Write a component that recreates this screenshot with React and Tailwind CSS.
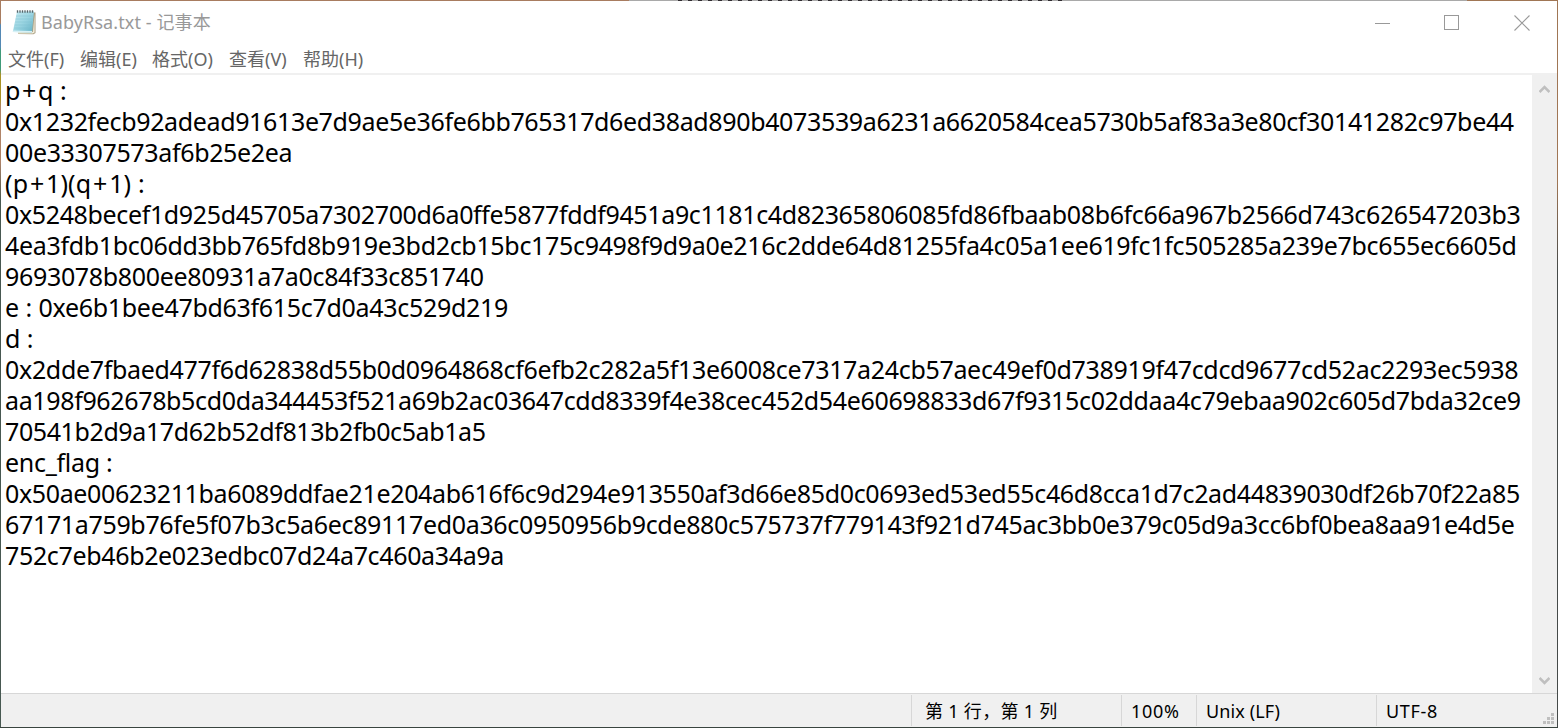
import React from 'react'

const MENUS = [
  { label: '文件(F)', cls: 'w-[72px]' },
  { label: '编辑(E)', cls: 'w-[72px]' },
  { label: '格式(O)', cls: 'w-[77px]' },
  { label: '查看(V)', cls: 'w-[74px]' },
  { label: '帮助(H)', cls: 'w-[72px]' },
]

const LINES = [
  { text: 'p+q :', cls: 'tracking-[0px]' },
  { text: '0x1232fecb92adead91613e7d9ae5e36fe6bb765317d6ed38ad890b4073539a6231a6620584cea5730b5af83a3e80cf30141282c97be44', cls: 'tracking-[-0.36px]' },
  { text: '00e33307573af6b25e2ea', cls: 'tracking-[-0.35px]' },
  { text: '(p+1)(q+1) :', cls: 'tracking-[0.15px]' },
  { text: '0x5248becef1d925d45705a7302700d6a0ffe5877fddf9451a9c1181c4d82365806085fd86fbaab08b6fc66a967b2566d743c626547203b3', cls: 'tracking-[-0.365px]' },
  { text: '4ea3fdb1bc06dd3bb765fd8b919e3bd2cb15bc175c9498f9d9a0e216c2dde64d81255fa4c05a1ee619fc1fc505285a239e7bc655ec6605d', cls: 'tracking-[-0.325px]' },
  { text: '9693078b800ee80931a7a0c84f33c851740', cls: 'tracking-[-0.33px]' },
  { text: 'e : 0xe6b1bee47bd63f615c7d0a43c529d219', cls: 'tracking-[-0.31px] [word-spacing:0.5px]' },
  { text: 'd :', cls: 'tracking-[-0.1px]' },
  { text: '0x2dde7fbaed477f6d62838d55b0d0964868cf6efb2c282a5f13e6008ce7317a24cb57aec49ef0d738919f47cdcd9677cd52ac2293ec5938', cls: 'tracking-[-0.325px]' },
  { text: 'aa198f962678b5cd0da344453f521a69b2ac03647cdd8339f4e38cec452d54e60698833d67f9315c02ddaa4c79ebaa902c605d7bda32ce9', cls: 'tracking-[-0.355px]' },
  { text: '70541b2d9a17d62b52df813b2fb0c5ab1a5', cls: 'tracking-[-0.4px]' },
  { text: 'enc_flag :', cls: 'tracking-[-0.3px]' },
  { text: '0x50ae00623211ba6089ddfae21e204ab616f6c9d294e913550af3d66e85d0c0693ed53ed55c46d8cca1d7c2ad44839030df26b70f22a85', cls: 'tracking-[-0.365px]' },
  { text: '67171a759b76fe5f07b3c5a6ec89117ed0a36c0950956b9cde880c575737f779143f921d745ac3bb0e379c05d9a3cc6bf0bea8aa91e4d5e', cls: 'tracking-[-0.34px]' },
  { text: '752c7eb46b2e023edbc07d24a7c460a34a9a', cls: 'tracking-[-0.35px]' },
]

function NotepadIcon() {
  return (
    <svg width="24" height="26" viewBox="0 0 24 26">
      <defs>
        <linearGradient id="page" x1="0" y1="0" x2="1" y2="1">
          <stop offset="0" stopColor="#c6eaf1" />
          <stop offset="0.5" stopColor="#9bd5e2" />
          <stop offset="1" stopColor="#62b0c4" />
        </linearGradient>
      </defs>
      <path d="M6 3L23.5 3.5L23.5 24L21.5 25.3L6 25Z" fill="#a59c82" />
      <path d="M6 23L21 23L22.6 4L22.6 23.4L21 24.6L6 24.4Z" fill="#f3edd8" />
      <path d="M5 2.5L22 2.5L20 23.5L0.8 23Z" fill="url(#page)" />
      <path d="M1.2 21.4L20.2 22L20 23.5L0.8 23Z" fill="#d7f1f6" />
      <path d="M4 7H20.5M3.6 10H20.3M3.2 13H20M2.7 16H19.7M2.2 19H19.4" stroke="#7dbfd0" strokeWidth="0.6" opacity="0.7" />
      <path d="M5.5 1.2V3.8M8 1.2V3.8M10.5 1.2V3.8M13 1.2V3.8M15.5 1.2V3.8M18 1.2V3.8M20.5 1.2V3.8" stroke="#58656a" strokeWidth="1.3" />
    </svg>
  )
}

function TitleBar() {
  return (
    <div className="flex h-11 shrink-0 items-center pl-[11px]">
      <div className="mb-[2px]"><NotepadIcon /></div>
      <span className="mb-[2px] ml-[5px] flex-1 whitespace-pre text-[18px] tracking-[0.1px] text-[#999999]">BabyRsa.txt - 记事本</span>
      <div className="flex items-center text-[#999999]">
        <svg width="16" height="16" className="mr-[53px]" shapeRendering="crispEdges"><path d="M0 8.5H15" stroke="currentColor" /></svg>
        <svg width="16" height="16" className="mr-[54px]" shapeRendering="crispEdges"><rect x="0.5" y="0.5" width="14" height="14" fill="none" stroke="currentColor" /></svg>
        <svg width="16" height="16" className="mr-[27px]"><path d="M0.5 0.5L15.5 15.5M15.5 0.5L0.5 15.5" stroke="currentColor" strokeWidth="1.1" /></svg>
      </div>
    </div>
  )
}

function MenuBar() {
  return (
    <div className="flex h-7 shrink-0 items-center pl-[7px] text-[18px] text-[#666666]">
      {MENUS.map((m) => (
        <span key={m.label} className={`${m.cls} whitespace-nowrap`}>{m.label}</span>
      ))}
    </div>
  )
}

function ScrollBar() {
  return (
    <div className="flex w-[25px] shrink-0 flex-col items-center justify-between bg-[#f0f0f0] pt-[9px] pb-[7px]">
      <svg width="11" height="10"><path d="M0.5 8L5.5 3L10.5 8" fill="none" stroke="#bfbfbf" strokeWidth="2.6" /></svg>
      <svg width="11" height="10"><path d="M0.5 2L5.5 7L10.5 2" fill="none" stroke="#bfbfbf" strokeWidth="2.6" /></svg>
    </div>
  )
}

function StatusBar() {
  return (
    <div className="flex h-[34px] shrink-0 border-t border-[#d7d7d7] bg-[#f0f0f0] pt-px text-[18px] text-black">
      <div className="flex-1" />
      <div className="mb-px flex w-[210px] items-center border-l border-[#d7d7d7] pt-[2px] pl-[13px] whitespace-pre tracking-[0.3px]">第 1 行，第 1 列</div>
      <div className="mb-px flex w-[75px] items-center border-l border-[#d7d7d7] pt-[2px] pl-[9px] tracking-[0.7px]">100%</div>
      <div className="mb-px flex w-[180px] items-center border-l border-[#d7d7d7] pt-[2px] pl-[9px] tracking-[0.1px]">Unix (LF)</div>
      <div className="mb-px flex w-[181px] items-center justify-between border-l border-[#d7d7d7] pt-[2px] pl-[9px] tracking-[0.7px]">
        UTF-8
        <svg width="12" height="12" className="mr-[2px] mb-px self-end" fill="#bfbfbf">
          <path d="M8 0h3v3h-3zM4 4h3v3h-3zM8 4h3v3h-3zM0 8h3v3h-3zM4 8h3v3h-3zM8 8h3v3h-3z" />
        </svg>
      </div>
    </div>
  )
}

// plus signs get a little extra room on both sides
function Line({ text, cls }) {
  return (
    <div className="h-[31px] whitespace-pre">
      <span className={cls}>
        {text.split(/(\+)/).map((part, i) => (
          part === '+' ? <span key={i} className="px-[1.7px]">+</span> : part
        ))}
      </span>
    </div>
  )
}

export default function App() {
  return (
    <div className="flex h-[728px] w-[1558px] flex-col overflow-hidden bg-white font-['Noto_Sans','Noto_Sans_CJK_SC',sans-serif]">
      {/* thin edges where the desktop shows around the window */}
      <div className="flex h-px shrink-0">
        <div className="w-[629px] bg-[#a87c60]" />
        <div className="w-[49px] bg-[#a9a9a9]" />
        <div className="w-[384px] bg-[repeating-linear-gradient(90deg,#302c30_0_4px,#a9a9a9_4px_10px)]" />
        <div className="w-[405px] bg-[#a9a9a9]" />
        <div className="flex-1 bg-[#a07655]" />
      </div>
      <div className="flex min-h-0 flex-1">
        <div className="w-px shrink-0 bg-[linear-gradient(#a87c60_0_22px,#5388b4_24px_46px,#3f9a78_50px_68px,#a99224_74px_98px,#b08468_106px_160px,#475851_200px_728px)]" />
        <div className="flex min-w-0 flex-1 flex-col">
          <TitleBar />
          <MenuBar />
          <div className="h-[2px] shrink-0 bg-[#f0f0f0]" />
          <div className="flex min-h-0 flex-1">
            <div className="min-w-0 flex-1 pl-1 text-[25px] leading-[31px] text-black">
              {LINES.map((l, i) => (
                <Line key={i} text={l.text} cls={l.cls} />
              ))}
            </div>
            <ScrollBar />
          </div>
          <StatusBar />
        </div>
        <div className="w-px shrink-0 bg-[linear-gradient(#a07655_0_180px,#454a49_270px_728px)]" />
      </div>
      <div className="h-px shrink-0 bg-[#39443f]" />
    </div>
  )
}
